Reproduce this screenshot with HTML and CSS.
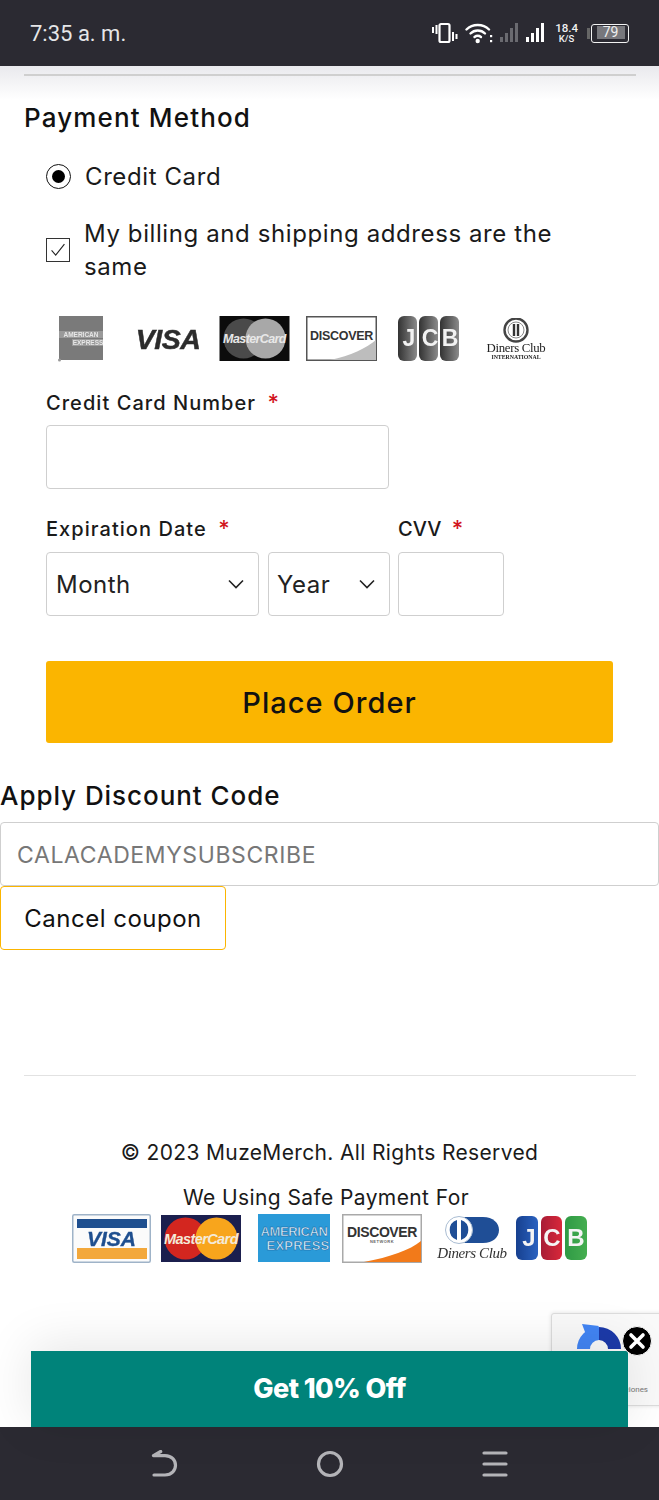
FILE: index.html
```html
<!DOCTYPE html>
<html lang="en">
<head>
<meta charset="utf-8">
<title>Checkout</title>
<link rel="stylesheet" href="styles.css">
</head>
<body>
<div class="phone">
  <header class="status">
    <span class="clock">7:35 a. m.</span>
    <div class="status-icons">
      <svg class="ic-vib" viewBox="0 0 28 22"><g fill="none" stroke="#fff" stroke-width="2.2"><rect x="8.5" y="2" width="10" height="18" rx="1.5"/></g><g fill="#fff"><rect x="1" y="5" width="2" height="6"/><rect x="4.500" y="3" width="2" height="9"/><rect x="21" y="10" width="2" height="9"/><rect x="24.500" y="12" width="2" height="5"/></g></svg>
      <svg class="ic-wifi" viewBox="0 0 28 22"><g fill="none" stroke="#fff" stroke-width="2.400" stroke-linecap="round"><path d="M1.500 7.500C7.500 1.500 18 1.500 24 7.500"/><path d="M5.500 11.500C9.500 7.500 16 7.500 20 11.500"/><path d="M9.500 15C11.500 13.500 14 13.500 16 15"/></g><circle cx="12.700" cy="19" r="2.200" fill="#fff"/><rect x="25" y="13" width="2.200" height="2.200" fill="#fff"/><rect x="25" y="18" width="2.200" height="2.200" fill="#fff"/></svg>
      <svg class="ic-sig" viewBox="0 0 20 22"><g fill="#6a6a70"><rect x="1" y="15" width="3" height="5"/><rect x="6" y="11" width="3" height="9"/><rect x="11" y="6" width="3" height="14"/><rect x="16" y="1" width="3" height="19"/></g></svg>
      <svg class="ic-sig" viewBox="0 0 20 22"><g fill="#fff"><rect x="1" y="15" width="3" height="5"/><rect x="6" y="11" width="3" height="9"/><rect x="11" y="6" width="3" height="14"/><rect x="16" y="1" width="3" height="19"/></g></svg>
      <div class="speed"><span class="speed-num">18.4</span><span class="speed-unit">K/S</span></div>
      <div class="battery"><span class="bat-cap"></span><div class="bat-body"><span class="bat-fill">79</span></div></div>
    </div>
  </header>

  <main class="page">
    <div class="shade"></div>
    <hr class="rule">
    <section class="payment">
      <h2 class="title">Payment Method</h2>
      <div class="option">
        <span class="radio"><span class="radio-dot"></span></span>
        <span class="opt-text">Credit Card</span>
      </div>
      <div class="option option-check">
        <span class="check">
          <svg viewBox="0 0 24 24"><path d="M5 12.500l4.500 5L19 5.500" fill="none" stroke="#222" stroke-width="1.200"/></svg>
        </span>
        <span class="opt-text opt-wrap">My billing and shipping address are the same</span>
      </div>

      <div class="cards-grey">
        <svg class="c-amex" viewBox="0 0 46 46"><rect x="1" y="0" width="44" height="44" fill="#7a7a7a"/><rect x="1" y="15" width="44" height="7" fill="#9a9a9a"/><rect x="14" y="23" width="31" height="7" fill="#9a9a9a"/><text x="23" y="21" class="t-amex">AMERICAN</text><text x="30" y="29" class="t-amex">EXPRESS</text><circle cx="1.500" cy="44" r="1.500" fill="#999"/></svg>
        <svg class="c-visa" viewBox="0 0 66 32"><text x="33" y="26" class="t-visa">VISA</text></svg>
        <svg class="c-mc" viewBox="0 0 70 45"><rect width="70" height="45" fill="#0c0c0c"/><circle cx="24" cy="22.500" r="20" fill="#4a4a4a"/><circle cx="46" cy="22.500" r="20" fill="#a8a8a8"/><text x="35" y="27" class="t-mc">MasterCard</text></svg>
        <svg class="c-disc" viewBox="0 0 71 45"><rect x=".75" y=".75" width="69.500" height="43.500" fill="#fff" stroke="#555" stroke-width="1.500"/><path d="M24 44C45 40 60 32 70 24V44Z" fill="#bdbdbd"/><text x="35.500" y="24" class="t-disc">DISCOVER</text></svg>
        <svg class="c-jcb" viewBox="0 0 61 45"><defs><linearGradient id="gj" x1="0" y1="0" x2="1" y2="0"><stop offset="0" stop-color="#333"/><stop offset="1" stop-color="#8a8a8a"/></linearGradient></defs><rect x="0" y="0" width="19" height="45" rx="6" fill="url(#gj)"/><rect x="21" y="0" width="19" height="45" rx="6" fill="url(#gj)"/><rect x="42" y="0" width="19" height="45" rx="6" fill="url(#gj)"/><text x="11 32 52" y="30" class="t-jcb">JCB</text></svg>
        <svg class="c-dine" viewBox="0 0 60 42"><circle cx="30" cy="12" r="11.500" fill="none" stroke="#444" stroke-width="2.400"/><circle cx="30" cy="12" r="8" fill="none" stroke="#888" stroke-width="1"/><rect x="26.800" y="6" width="2.400" height="12" fill="#333"/><rect x="30.800" y="6" width="2.400" height="12" fill="#333"/><text x="30" y="34" class="t-dine">Diners Club</text><text x="30" y="41" class="t-dine2">INTERNATIONAL</text></svg>
      </div>

      <label class="lbl lbl-num">Credit Card Number <span class="req">*</span></label>
      <input class="field field-num" type="text" aria-label="Credit Card Number">

      <div class="exp-row">
        <div class="exp-col">
          <label class="lbl">Expiration Date <span class="req">*</span></label>
          <div class="selects">
            <div class="select sel-month"><span>Month</span><svg class="chev" viewBox="0 0 16 10"><path d="M1 1.500l7 7 7-7" fill="none" stroke="#222" stroke-width="1.600"/></svg></div>
            <div class="select sel-year"><span>Year</span><svg class="chev" viewBox="0 0 16 10"><path d="M1 1.500l7 7 7-7" fill="none" stroke="#222" stroke-width="1.600"/></svg></div>
          </div>
        </div>
        <div class="cvv-col">
          <label class="lbl lbl-tight">CVV <span class="req">*</span></label>
          <input class="field field-cvv" type="text" aria-label="CVV">
        </div>
      </div>

      <button class="place" type="button">Place Order</button>
    </section>

    <section class="discount">
      <h2 class="title title-disc">Apply Discount Code</h2>
      <div class="code">CALACADEMYSUBSCRIBE</div>
      <button class="cancel" type="button">Cancel coupon</button>
    </section>

    <hr class="rule rule-foot">

    <footer class="foot">
      <p class="copy">© 2023 MuzeMerch. All Rights Reserved</p>
      <p class="safe">We Using Safe Payment For</p>
      <div class="cards-color">
        <svg class="b-visa" viewBox="0 0 79 49"><rect x=".75" y=".75" width="77.500" height="47.500" rx="1.500" fill="#fbfbfb" stroke="#9fb3c8" stroke-width="1.500"/><rect x="5" y="5" width="70" height="9" fill="#1f4f8f"/><rect x="5" y="34" width="70" height="11" fill="#f3a83b"/><text x="39.500" y="32" class="t-bvisa">VISA</text></svg>
        <svg class="b-mc" viewBox="0 0 80 47"><rect width="80" height="47" fill="#1b1f4e"/><circle cx="24.500" cy="23.500" r="21" fill="#d3261f"/><circle cx="55.500" cy="23.500" r="21" fill="#f8a51c"/><text x="40" y="29" class="t-bmc">MasterCard</text></svg>
        <svg class="b-amex" viewBox="0 0 72 48"><rect width="72" height="48" fill="#2a9ad8"/><text x="36" y="22" class="t-bamex">AMERICAN</text><text x="40" y="36" class="t-bamex t-bexp">EXPRESS</text></svg>
        <svg class="b-disc" viewBox="0 0 80 49"><rect x=".75" y=".75" width="78.500" height="47.500" fill="#fff" stroke="#a9a9a9" stroke-width="1.500"/><path d="M22 48C48 43 68 36 79 27V48Z" fill="#f27a1a"/><text x="40" y="23" class="t-bdisc">DISCOVER</text><text x="40" y="29" class="t-bnet">NETWORK</text></svg>
        <svg class="b-dine" viewBox="0 0 70 44"><path d="M24 1H46C56 1 62 7 62 14C62 21 56 27 46 27H24Z" fill="#1f4e96"/><circle cx="22" cy="14" r="13.500" fill="#fff" stroke="#a9bcd2"/><path d="M20 4A10.500 10.500 0 0 0 20 24Z M24 4A10.500 10.500 0 0 1 24 24Z" fill="#1f4e96"/><text x="35" y="42" class="t-bdine">Diners Club</text></svg>
        <svg class="b-jcb" viewBox="0 0 71 44"><defs><linearGradient id="gb" x1="0" y1="0" x2="1" y2="0"><stop offset="0" stop-color="#17408f"/><stop offset="1" stop-color="#2a62c0"/></linearGradient><linearGradient id="gr" x1="0" y1="0" x2="1" y2="0"><stop offset="0" stop-color="#a81c36"/><stop offset="1" stop-color="#d8283a"/></linearGradient><linearGradient id="gg" x1="0" y1="0" x2="1" y2="0"><stop offset="0" stop-color="#2f9a45"/><stop offset="1" stop-color="#45ae50"/></linearGradient></defs><rect x="0" y="0" width="22" height="44" rx="6" fill="url(#gb)"/><rect x="25" y="0" width="21" height="44" rx="6" fill="url(#gr)"/><rect x="49" y="0" width="22" height="44" rx="6" fill="url(#gg)"/><text x="13 36 60" y="30" class="t-bjcb">JCB</text></svg>
      </div>
    </footer>

    <aside class="recaptcha">
      <svg class="re-logo" viewBox="0 0 60 44"><path d="M25 5A22 22 0 0 1 47 27H34A9 9 0 0 0 25 18Z" fill="#1c3aa9"/><path d="M3 27A22 22 0 0 1 25 5V18A9 9 0 0 0 16 27Z" fill="#4285f4"/><path d="M8 2L25 4 14 18Z" fill="#4285f4"/></svg>
      <span class="re-text">Privacidad - Condiciones</span>
    </aside>
    <div class="promo">Get 10% Off</div>
    <button class="close" type="button" aria-label="Close">
      <svg viewBox="0 0 24 24"><path d="M6 6L18 18M18 6L6 18" stroke="#fff" stroke-width="3.600" stroke-linecap="round"/></svg>
    </button>
  </main>

  <nav class="nav">
    <svg class="nav-ic" viewBox="0 0 28 28"><path d="M9.700 1.500L2.500 5.700H14C28 5.700 28 25 14 25H3" fill="none" stroke="#b4b4b8" stroke-width="3.200" stroke-linecap="round" stroke-linejoin="round"/></svg>
    <svg class="nav-ic" viewBox="0 0 28 28"><circle cx="14" cy="14" r="11.500" fill="none" stroke="#b4b4b8" stroke-width="3.200"/></svg>
    <svg class="nav-ic" viewBox="0 0 28 28"><path d="M3 3H25M3 14H25M3 25H25" fill="none" stroke="#b4b4b8" stroke-width="3.200" stroke-linecap="round"/></svg>
  </nav>
</div>
</body>
</html>
```
FILE: styles.css
```css
* { box-sizing: border-box; }
html, body { margin: 0; padding: 0; background: #fff; }
body { font-family: "Inter", "Noto Sans", sans-serif; color: #111; }
.phone { width: 659px; height: 1500px; display: flex; flex-direction: column; overflow: hidden; }

.status { height: 66px; flex: none; background: #2b2a32; display: flex; align-items: center; justify-content: space-between; padding: 0 30px 0 30px; }
.clock { font-family: "Roboto", sans-serif; font-size: 22px; color: #e6e6e8; }
.status-icons { display: flex; align-items: center; }
.ic-vib { width: 28px; height: 22px; margin-right: 1px; }
.ic-wifi { width: 28px; height: 22px; margin-left: 5px; }
.ic-sig { width: 20px; height: 22px; margin-left: 6px; }
.speed { display: flex; flex-direction: column; align-items: center; margin-left: 10px; color: #f2f2f2; font-family: "Roboto", sans-serif; font-weight: 500; }
.speed-num { font-size: 11.500px; line-height: 12px; }
.speed-unit { font-size: 9.500px; line-height: 10px; }
.battery { display: flex; align-items: center; margin-left: 9px; }
.bat-cap { width: 3px; height: 11px; background: #666; }
.bat-body { width: 38px; height: 19px; border: 1.500px solid #f2f2f2; border-radius: 3px; padding: 1.500px; margin-left: 1px; }
.bat-fill { display: block; width: 28px; height: 13px; margin-left: 3px; background: #77777c; color: #eee; font-family: "Roboto", sans-serif; font-size: 14px; line-height: 13px; text-align: center; }

.page { flex: 1; position: relative; display: flex; flex-direction: column; min-height: 0; }
.shade { position: absolute; left: 0; right: 0; top: 0; height: 34px; background: linear-gradient(#e9e9ed, #fff); }
.rule { position: relative; margin: 8px 23px 0 24px; border: 0; height: 1.500px; background: #cfcfcf; flex: none; }
.rule-foot { margin-top: 125px; height: 1px; background: #e2e2e2; }

.payment { position: relative; padding: 0 46px; }
.title { margin: 0; font-size: 26px; font-weight: 500; line-height: 32px; letter-spacing: 1.15px; color: #111; }
.payment > .title { margin: 26px 0 0 -22px; }

.option { display: flex; align-items: center; font-size: 24px; line-height: 33px; letter-spacing: .6px; color: #1a1a1a; }
.option { margin-top: 26px; }
.option-check { margin-top: 24px; }
.radio { width: 25px; height: 25px; flex: none; border: 1.500px solid #111; border-radius: 50%; display: flex; align-items: center; justify-content: center; }
.radio-dot { width: 13px; height: 13px; border-radius: 50%; background: #000; }
.opt-text { margin-left: 14px; }
.opt-wrap { width: 500px; }
.check { width: 24px; height: 24px; flex: none; border: 1.500px solid #333; display: block; margin-top: 0; }
.check svg { display: block; width: 100%; height: 100%; }

.cards-grey { display: grid; grid-template-columns: repeat(6, 87px); justify-items: center; align-items: center; height: 46px; margin: 33px 0 0 -9px; filter: blur(.6px); }
.cards-grey svg { display: block; }
.c-amex { width: 46px; height: 46px; }
.c-visa { width: 66px; height: 32px; }
.c-mc, .c-disc { width: 71px; height: 45px; }
.c-jcb { width: 61px; height: 45px; }
.c-dine { width: 60px; height: 42px; }
.t-amex { font: 700 6.500px "Liberation Sans", sans-serif; fill: #e6e6e6; text-anchor: middle; }
.t-visa { font: italic 700 28.500px "Liberation Sans", sans-serif; fill: #2c2c2c; stroke: #2c2c2c; stroke-width: .5px; text-anchor: middle; letter-spacing: -.5px; }
.t-mc { font: italic 700 12.500px "Liberation Sans", sans-serif; fill: #e8e8e8; text-anchor: middle; letter-spacing: -.6px; }
.t-disc { font: 700 12.500px "Liberation Sans", sans-serif; fill: #333; text-anchor: middle; letter-spacing: -.3px; }
.t-jcb { font: 700 23px "Liberation Sans", sans-serif; fill: #f2f2f2; text-anchor: middle; }
.t-dine { font: 12.800px "Liberation Serif", serif; fill: #222; text-anchor: middle; letter-spacing: -.3px; }
.t-dine2 { font: 700 5.800px "Liberation Serif", serif; fill: #222; text-anchor: middle; }

.lbl { display: block; font-size: 20px; font-weight: 500; line-height: 26px; letter-spacing: 1.05px; color: #1a1a1a; }
.lbl-tight { letter-spacing: 0; }
.lbl-num { margin-top: 28px; }
.req { font-size: 22px; line-height: 0; color: #d2161e; margin-left: 5px; }
.field { display: block; height: 64px; border: 1px solid #cfcfcf; border-radius: 4px; background: #fff; padding: 0; font: inherit; }
.field-num { width: 343px; margin-top: 9px; }
.exp-row { display: flex; margin-top: 27px; }
.exp-col { width: 352px; }
.selects { display: flex; gap: 9px; margin-top: 10px; }
.select { height: 64px; border: 1px solid #cfcfcf; border-radius: 4px; display: flex; align-items: center; justify-content: space-between; font-size: 24px; letter-spacing: .5px; color: #222; }
.select span { padding-top: 2px; }
.sel-month { width: 213px; padding: 0 14px 0 9px; }
.sel-year { width: 122px; padding: 0 14px 0 8px; }
.chev { width: 16px; height: 10px; }
.cvv-col { width: 106px; }
.field-cvv { width: 106px; margin-top: 10px; }

.place { display: block; width: 567px; height: 82px; margin-top: 45px; padding: 2px 0 0; background: #fbb500; border: 0; border-radius: 3px; font: 500 29px "Inter", sans-serif; letter-spacing: 1.05px; color: #111; }

.discount { position: relative; }
.title-disc { margin: 37px 0 0 0; letter-spacing: .95px; }
.code { height: 64px; margin-top: 10px; border: 1px solid #cfcfcf; border-radius: 4px; display: flex; align-items: center; padding: 2px 0 0 16px; font-size: 23px; letter-spacing: .6px; color: #777; }
.cancel { display: block; width: 226px; height: 64px; background: #fff; border: 1px solid #fbb500; border-radius: 4px; font: 400 24px "Inter", sans-serif; letter-spacing: .5px; color: #111; padding: 2px 0 0; }

.foot { position: relative; display: flex; flex-direction: column; align-items: center; }
.copy, .safe { margin: 0; font-size: 21px; line-height: 28px; letter-spacing: .35px; color: #1a1a1a; text-align: center; }
.copy { margin-top: 63px; }
.safe { margin: 17px 7px 0 0; letter-spacing: .4px; }
.cards-color { display: flex; align-items: center; width: 100%; height: 49px; padding-left: 72px; margin-top: 2px; filter: blur(.4px); }
.cards-color svg { display: block; flex: none; }
.b-visa { width: 79px; height: 49px; }
.b-mc { width: 80px; height: 47px; margin-left: 10px; }
.b-amex { width: 72px; height: 48px; margin-left: 17px; }
.b-disc { width: 80px; height: 49px; margin-left: 12px; }
.b-dine { width: 70px; height: 44px; margin-left: 15px; }
.b-jcb { width: 71px; height: 44px; margin-left: 9px; }
.t-bvisa { font: italic 700 21px "Liberation Sans", sans-serif; fill: #1f4f8f; stroke: #1f4f8f; stroke-width: .4px; text-anchor: middle; }
.t-bmc { font: italic 700 14.500px "Liberation Sans", sans-serif; fill: #f4ead8; text-anchor: middle; letter-spacing: -.6px; }
.t-bamex { font: 700 13px "Liberation Sans", sans-serif; fill: #d8eefa; stroke: #17619a; stroke-width: .5px; text-anchor: middle; letter-spacing: -.4px; }
.t-bexp { letter-spacing: .2px; }
.t-bdisc { font: 700 14px "Liberation Sans", sans-serif; fill: #333; text-anchor: middle; letter-spacing: -.4px; }
.t-bnet { font: 700 4px "Liberation Sans", sans-serif; fill: #666; text-anchor: middle; letter-spacing: .5px; }
.t-bdine { font: italic 400 15px "Liberation Serif", serif; fill: #333; text-anchor: middle; letter-spacing: -.4px; }
.t-bjcb { font: 700 24px "Liberation Sans", sans-serif; fill: #f4f4f4; text-anchor: middle; }

.recaptcha { position: absolute; left: 551px; top: 1247px; width: 120px; height: 93px; background: #f9f9f9; border: 1px solid #dcdcdc; border-radius: 3px; box-shadow: 0 0 4px rgba(0,0,0,.12); overflow: hidden; }
.re-logo { position: absolute; left: 22px; top: 8px; width: 60px; height: 44px; }
.re-text { position: absolute; right: 22px; bottom: 11px; font: 8px "Roboto", sans-serif; color: #777; white-space: nowrap; }
.promo { position: absolute; left: 31px; bottom: 0; width: 597px; height: 76px; padding-bottom: 2px; background: #00837a; color: #fff; font: 800 27px "Inter", sans-serif; letter-spacing: -.6px; display: flex; align-items: center; justify-content: center; box-shadow: 0 -6px 50px rgba(0,0,0,.1); }
.close { position: absolute; left: 622px; top: 1260px; width: 30px; height: 30px; padding: 0; background: #000; border: 1px solid #fff; border-radius: 50%; display: flex; align-items: center; justify-content: center; }
.close svg { width: 24px; height: 24px; }

.nav { height: 73px; flex: none; background: #2b2a32; display: grid; grid-template-columns: 1fr 1fr 1fr; padding: 0 82px; align-items: center; }
.nav-ic { width: 28px; height: 28px; justify-self: center; }
```
